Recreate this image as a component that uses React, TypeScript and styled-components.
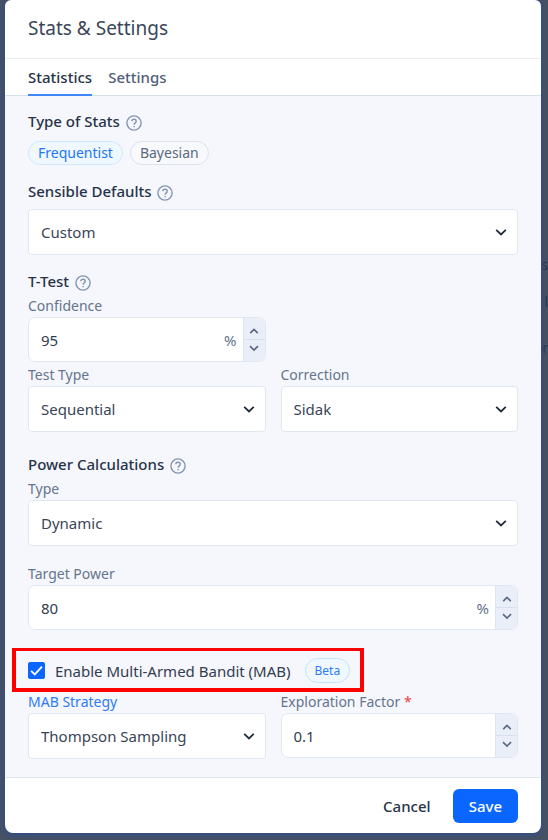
import React, { useId, useState } from "react";
import styled, { createGlobalStyle, css } from "styled-components";

const GlobalStyle = createGlobalStyle`
  *, *::before, *::after { box-sizing: border-box; }
  body {
    margin: 0;
    background: #465163;
    color: #323d4f;
    font-family: "Noto Sans", "Open Sans", sans-serif;
    font-size: 15px;
  }
  button, input, select { font: inherit; color: inherit; margin: 0; }
`;

const Backdrop = styled.div`
  position: relative;
  min-height: 100vh;
  padding: 0 7px 7px 5px;
  overflow: hidden;
`;

const PageBehind = styled.div`
  position: absolute;
  top: 246px;
  right: 0;
  display: grid;
  grid-template-rows: 36px 38px 54px;
  align-items: center;
  justify-items: end;
  font-size: 14px;
  color: #2c3648;
`;

const Modal = styled.section`
  position: relative;
  background: #fff;
  border-radius: 6px 6px 8px 8px;
  box-shadow: 0 1px 5px 1px #2f4e8a;
  overflow: hidden;
`;

const Header = styled.header`
  padding: 13px 23px 15px;
  border-bottom: 1px solid #e9ebee;
`;

const Title = styled.h1`
  margin: 0;
  font-size: 19px;
  line-height: 30px;
  font-weight: 400;
  color: #3a4558;
`;

const Tabs = styled.nav`
  display: flex;
  gap: 16px;
  padding: 0 23px;
  border-bottom: 1px solid #d5deec;
`;

const Tab = styled.button<{ $active?: boolean }>`
  height: 37px;
  margin-bottom: -1px;
  padding: 0;
  border: 0;
  border-bottom: 2px solid ${(p) => (p.$active ? "#3f86f7" : "transparent")};
  background: none;
  font-weight: 500;
  color: ${(p) => (p.$active ? "#273347" : "#526079")};
`;

const Body = styled.div`
  padding: 14px 23px 18px;
  background: #f5f7fc;
  border-bottom: 1px solid #dfe5ef;
`;

const Section = styled.section<{ $gap?: number }>`
  margin-bottom: ${(p) => p.$gap ?? 15}px;
`;

const Heading = styled.h2<{ $gap?: number }>`
  display: flex;
  align-items: center;
  gap: 6px;
  margin: 0 0 ${(p) => p.$gap ?? 2}px;
  font-size: 15px;
  line-height: 22px;
  font-weight: 500;
  color: #273347;
`;

const HelpButton = styled.button`
  display: flex;
  padding: 4px 0 0;
  border: 0;
  background: none;
  color: #8595b0;
`;

const Chips = styled.div`
  display: flex;
  gap: 7px;
`;

const Chip = styled.button<{ $active?: boolean }>`
  height: 24px;
  padding: 0 9px;
  border: 1px solid ${(p) => (p.$active ? "#cfe8fd" : "#dde3ed")};
  border-radius: 12px;
  background: ${(p) => (p.$active ? "#eff8ff" : "#f7f9fd")};
  color: ${(p) => (p.$active ? "#2176f8" : "#5b697f")};
  font-size: 14px;
  line-height: 20px;
`;

const Columns = styled.div`
  display: grid;
  grid-template-columns: 1fr 1fr;
  gap: 1px 15px;
`;

const FieldBox = styled.div`
  min-width: 0;
`;

const Label = styled.label<{ $accent?: boolean }>`
  display: block;
  font-size: 14px;
  line-height: 23px;
  color: ${(p) => (p.$accent ? "#2e7bf6" : "#65748c")};
`;

const Required = styled.span`
  color: #ee3e3e;
`;

const controlFrame = css`
  border: 1px solid #e1e7f1;
  background: #fff;
`;

const SelectWrap = styled.div`
  display: grid;
  align-items: center;

  & > * { grid-area: 1 / 1; }
  & > svg {
    justify-self: end;
    margin-right: 11px;
    pointer-events: none;
    color: #1f2a3b;
  }
`;

const Select = styled.select`
  ${controlFrame}
  appearance: none;
  width: 100%;
  height: 46px;
  padding: 0 36px 0 12px;
  border-radius: 4px;
  color: #3a4558;
`;

const NumberFrame = styled.div`
  ${controlFrame}
  display: flex;
  align-items: stretch;
  height: 45px;
  border-radius: 7px;
  overflow: hidden;
`;

const NumberInput = styled.input`
  flex: 1;
  min-width: 0;
  padding: 0 0 0 12px;
  border: 0;
  outline: 0;
  background: none;
`;

const Unit = styled.span`
  align-self: center;
  padding-right: 6px;
  color: #65748c;
`;

const Stepper = styled.div`
  display: grid;
  grid-template-rows: 21px 1fr;
  width: 22px;
  border-left: 1px solid #dde4f0;
  background: #e9eef9;
`;

const StepButton = styled.button`
  display: flex;
  align-items: center;
  justify-content: center;
  padding: 4px 0 0;
  border: 0;
  background: none;
  color: #5a6a83;

  & + & {
    padding: 0 0 6px;
    border-top: 1px solid #d9e1ee;
  }
`;

const Highlighted = styled.div`
  position: relative;
  display: inline-flex;
  align-items: center;
  gap: 14px;
  height: 25px;
  margin: 13px 0 7px;
  vertical-align: top;

  &::after {
    content: "";
    position: absolute;
    inset: -10px -14px -9px -16px;
    border: 4px solid #ff0000;
    border-width: 3px 4px 4px;
    pointer-events: none;
  }
`;

const CheckLabel = styled.label`
  display: flex;
  align-items: center;
  gap: 10px;
`;

const CheckMark = styled.span`
  display: grid;
  width: 17px;
  height: 17px;

  & > * { grid-area: 1 / 1; }
  & > svg { pointer-events: none; }
`;

const CheckBox = styled.input`
  appearance: none;
  width: 17px;
  height: 17px;
  border: 1px solid #0a66ff;
  border-radius: 2px;
  background: #fff;

  &:checked { background: #0a66ff; }
`;

const Badge = styled.span`
  padding: 0 9px;
  border: 1px solid #c5e5fc;
  border-radius: 13px;
  background: #eff8ff;
  color: #2e7bf6;
  font-size: 12px;
  line-height: 23px;
`;

const Footer = styled.footer`
  display: flex;
  justify-content: flex-end;
  gap: 6px;
  padding: 11px 23px 10px;
`;

const Action = styled.button<{ $primary?: boolean }>`
  height: 34px;
  padding: 0 16px;
  border: 0;
  border-radius: 6px;
  background: ${(p) => (p.$primary ? "#0a66ff" : "transparent")};
  color: ${(p) => (p.$primary ? "#fff" : "#273347")};
  font-weight: 500;
`;

function Chevron({ up, small }: { up?: boolean; small?: boolean }) {
  const size = small ? 10 : 12;
  return (
    <svg width={size} height={size} viewBox="0 0 12 12" fill="none" stroke="currentColor" strokeWidth={small ? 2 : 1.8} aria-hidden>
      <path d={up ? "M1.5 8.5 6 4l4.5 4.5" : "M1.2 3.8 6 8.4l4.8-4.6"} />
    </svg>
  );
}

function Help({ topic }: { topic: string }) {
  return (
    <HelpButton type="button" aria-label={`About ${topic}`}>
      <svg width="16" height="16" viewBox="0 0 16 16" fill="none" stroke="currentColor" strokeWidth="1.4" aria-hidden>
        <circle cx="8" cy="8" r="7.1" />
        <path d="M5.8 6.3c.1-1.3 1-2 2.2-2s2.2.8 2.2 1.9c0 1.7-2.1 1.7-2.1 3.6" />
        <path d="M8.1 10.9v1.4" />
      </svg>
    </HelpButton>
  );
}

interface FieldProps {
  label: string;
  hideLabel?: boolean;
  accent?: boolean;
  required?: boolean;
}

function SelectField({ label, hideLabel, accent, options }: FieldProps & { options: string[] }) {
  const id = useId();
  return (
    <FieldBox>
      {!hideLabel && <Label htmlFor={id} $accent={accent}>{label}</Label>}
      <SelectWrap>
        <Select id={id} aria-label={hideLabel ? label : undefined}>
          {options.map((option) => <option key={option}>{option}</option>)}
        </Select>
        <Chevron />
      </SelectWrap>
    </FieldBox>
  );
}

function NumberField({ label, required, initial, step, unit }: FieldProps & { initial: number; step: number; unit?: string }) {
  const id = useId();
  const [value, setValue] = useState(String(initial));
  const move = (by: number) => setValue((v) => String(Math.round((Number(v) + by) * 10) / 10));
  return (
    <FieldBox>
      <Label htmlFor={id}>{label}{required && <Required> *</Required>}</Label>
      <NumberFrame>
        <NumberInput id={id} inputMode="decimal" required={required} value={value} onChange={(e) => setValue(e.target.value)} />
        {unit && <Unit>{unit}</Unit>}
        <Stepper>
          <StepButton type="button" aria-label={`Increase ${label}`} onClick={() => move(step)}><Chevron up small /></StepButton>
          <StepButton type="button" aria-label={`Decrease ${label}`} onClick={() => move(-step)}><Chevron small /></StepButton>
        </Stepper>
      </NumberFrame>
    </FieldBox>
  );
}

export default function App() {
  const [method, setMethod] = useState("Frequentist");
  const [bandit, setBandit] = useState(true);
  return (
    <>
      <GlobalStyle />
      <Backdrop>
        <PageBehind aria-hidden>
          <span>s</span>
          <span>l</span>
          <span>or</span>
        </PageBehind>
        <Modal role="dialog" aria-labelledby="dialog-title">
          <Header><Title id="dialog-title">Stats &amp; Settings</Title></Header>
          <Tabs>
            <Tab type="button" $active>Statistics</Tab>
            <Tab type="button">Settings</Tab>
          </Tabs>
          <Body>
            <Section>
              <Heading $gap={9}>Type of Stats <Help topic="Type of Stats" /></Heading>
              <Chips>
                {["Frequentist", "Bayesian"].map((name) => (
                  <Chip key={name} type="button" $active={method === name} onClick={() => setMethod(name)}>{name}</Chip>
                ))}
              </Chips>
            </Section>
            <Section>
              <Heading $gap={7}>Sensible Defaults <Help topic="Sensible Defaults" /></Heading>
              <SelectField label="Sensible Defaults" hideLabel options={["Custom"]} />
            </Section>
            <Section $gap={21}>
              <Heading>T-Test <Help topic="T-Test" /></Heading>
              <Columns>
                <NumberField label="Confidence" initial={95} step={1} unit="%" />
                <span />
                <SelectField label="Test Type" options={["Sequential"]} />
                <SelectField label="Correction" options={["Sidak"]} />
              </Columns>
            </Section>
            <Section $gap={16}>
              <Heading>Power Calculations <Help topic="Power Calculations" /></Heading>
              <SelectField label="Type" options={["Dynamic"]} />
            </Section>
            <Section>
              <NumberField label="Target Power" initial={80} step={1} unit="%" />
            </Section>
            <Highlighted>
              <CheckLabel>
                <CheckMark>
                  <CheckBox type="checkbox" checked={bandit} onChange={(e) => setBandit(e.target.checked)} />
                  <svg width="17" height="17" viewBox="0 0 18 18" fill="none" stroke="#fff" strokeWidth="1.9" aria-hidden>
                    <path d="m3.3 9.3 3.9 3.8 7.6-8.2" />
                  </svg>
                </CheckMark>
                Enable Multi-Armed Bandit (MAB)
              </CheckLabel>
              <Badge>Beta</Badge>
            </Highlighted>
            <Columns>
              <SelectField label="MAB Strategy" accent options={["Thompson Sampling"]} />
              <NumberField label="Exploration Factor" required initial={0.1} step={0.1} />
            </Columns>
          </Body>
          <Footer>
            <Action type="button">Cancel</Action>
            <Action type="button" $primary>Save</Action>
          </Footer>
        </Modal>
      </Backdrop>
    </>
  );
}
